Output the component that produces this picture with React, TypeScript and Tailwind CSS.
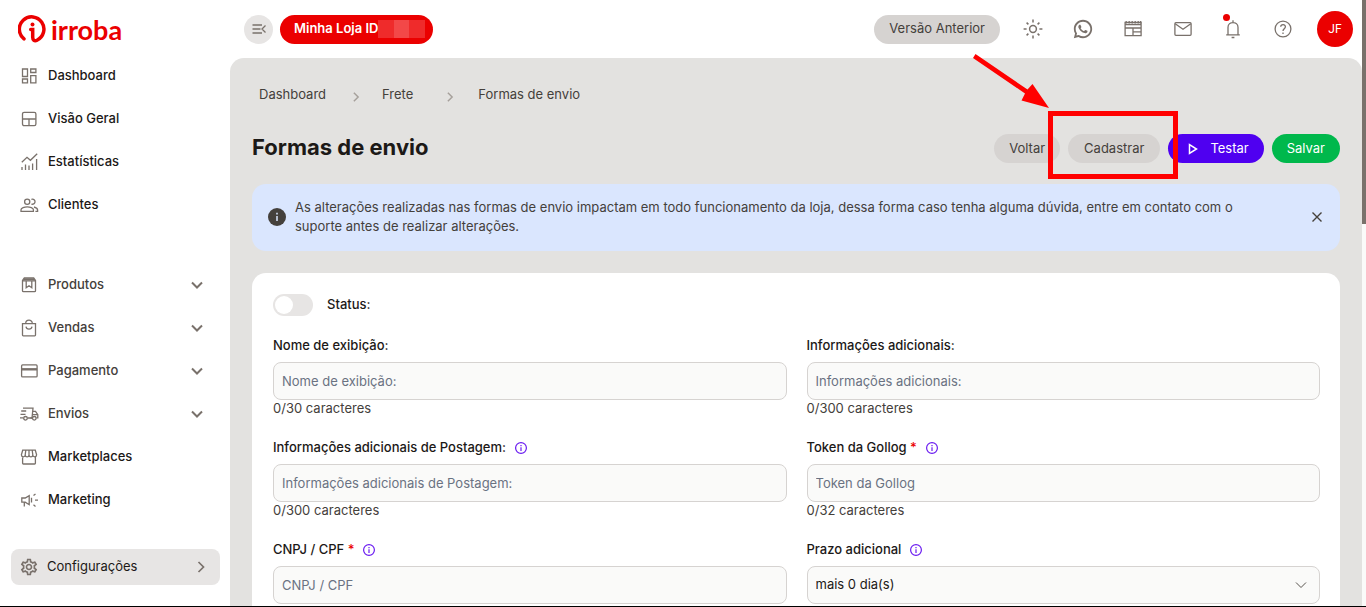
import React from "react";
import { MdOutlineSettings } from "react-icons/md";
import { RiWhatsappLine } from "react-icons/ri";

const Icon = ({
  children,
  className = "size-[22px]",
}: {
  children: React.ReactNode;
  className?: string;
}) => (
  <svg
    viewBox="0 0 22 22"
    fill="none"
    stroke="currentColor"
    strokeWidth="1.3"
    aria-hidden="true"
    className={`shrink-0 ${className}`}
  >
    {children}
  </svg>
);

const icons = {
  dashboard: (
    <Icon>
      <path d="M4.5 4h5v7.5h-5zM12.7 4h5.2v3.5h-5.2zM4.5 14h5v3.9h-5zM12.7 10.6h5.2v7.3h-5.2z" />
    </Icon>
  ),
  layout: (
    <Icon>
      <rect x="4.5" y="4.3" width="13.4" height="13.4" rx="1.6" />
      <path d="M4.5 11h13.4M11 11v6.7" />
    </Icon>
  ),
  stats: (
    <Icon>
      <path d="M3.8 11.2 9 6.3l3.4 3 6.8-6.6" />
      <path d="M4 19v-3M7.5 19v-5.6M11 19v-4.6M14.6 19v-6.6M18.6 19V8" />
    </Icon>
  ),
  clients: (
    <Icon>
      <circle cx="9.2" cy="7.7" r="2.6" />
      <path d="M3 17.4v-1.6c0-1.8 3.5-2.9 6.2-2.9s6.2 1.1 6.2 2.9v1.6zM13.4 5.3c2.8-.5 3.9 1.3 3.6 2.8-.3 1.5-1.8 2.5-3.6 2M16 13c2.3.6 3.6 1.7 3.6 3v1.4h-2.2" />
    </Icon>
  ),
  products: (
    <Icon>
      <path d="M4.5 6.5v10.2c0 .6.4 1 1 1h11c.6 0 1-.4 1-1V6.5L15.7 4H6.3zM4.5 6.8h13M8.2 6.8v7l2.8-2 2.8 2v-7" />
      <path d="M6 5.4h10" strokeWidth="2" />
    </Icon>
  ),
  sales: (
    <Icon>
      <path d="M4.5 6.6h13v11.5c0 .4-.3.7-.7.7H5.2a.7.7 0 0 1-.7-.7zM7.7 6.4c0-4.4 6.6-4.4 6.6 0M8 9.7c.5 3.3 5.5 3.3 6 0" />
    </Icon>
  ),
  payment: (
    <Icon>
      <rect x="3.6" y="4.9" width="15.5" height="12" rx="1" />
      <path d="M3.6 9.3h15.5" strokeWidth="2.4" />
    </Icon>
  ),
  shipping: (
    <Icon>
      <path d="M5 5.2h10l-1 9.8H9.4M15 8.3h2.5l2.3 3.4v3.2h-1.4M14.500 11.7h5.200M3.200 8h5M2.500 11.300h5" />
      <circle cx="7.5" cy="15.3" r="1.8" />
      <circle cx="16.3" cy="15.3" r="1.8" />
      <path d="M2 14.9h3.600M12.500 15h2" />
    </Icon>
  ),
  marketplaces: (
    <Icon>
      <path d="M4.600 10v7.200c0 .5.300.8.800.8h11.200c.5 0 .8-.3.8-.8V10M4.700 4.200h12.600l1.300 4.600c0 2.600-3.500 2.600-3.800.2-.2 2.600-3.600 2.600-3.800 0-.2 2.600-3.600 2.600-3.800 0-.3 2.400-3.800 2.400-3.800-.2zM7.800 4.200 7.200 9M11 4.200V9M14.200 4.200l.6 4.800" />
    </Icon>
  ),
  marketing: (
    <Icon>
      <path d="M3.8 9v4.2h3.4l4 2.5V6.7L7.2 9zM6.3 13.2v4.2M13.5 8.8v4.6M17 11.1h3M15.5 6.5l2-1.6M15.5 15.8l2 1.6" />
    </Icon>
  ),
};

const ChevronDown = ({ className }: { className: string }) => (
  <svg
    viewBox="0 0 14 14"
    fill="none"
    stroke="currentColor"
    aria-hidden="true"
    className={className}
  >
    <path d="m2 4.5 5 5 5-5" />
  </svg>
);

const ChevronRight = ({ className }: { className: string }) => (
  <svg
    viewBox="0 0 14 14"
    fill="none"
    stroke="currentColor"
    strokeWidth="1.7"
    aria-hidden="true"
    className={className}
  >
    <path d="m4.5 2 5 5-5 5" />
  </svg>
);

const InfoIcon = () => (
  <svg
    viewBox="0 0 14 14"
    fill="none"
    stroke="currentColor"
    strokeWidth="1.2"
    aria-hidden="true"
    className="ml-2 size-[14px] text-[#6a1bf0]"
  >
    <circle cx="7" cy="7" r="5.4" />
    <path d="M7 6.3v3.8M7 4v1.2" />
  </svg>
);

const mainLinks = [
  { label: "Dashboard", icon: icons.dashboard },
  { label: "Visão Geral", icon: icons.layout },
  { label: "Estatísticas", icon: icons.stats },
  { label: "Clientes", icon: icons.clients },
];

const storeLinks = [
  { label: "Produtos", icon: icons.products, submenu: true },
  { label: "Vendas", icon: icons.sales, submenu: true },
  { label: "Pagamento", icon: icons.payment, submenu: true },
  { label: "Envios", icon: icons.shipping, submenu: true },
  { label: "Marketplaces", icon: icons.marketplaces },
  { label: "Marketing", icon: icons.marketing },
];

type NavItemProps = {
  label: string;
  icon: React.ReactNode;
  submenu?: boolean;
};

const NavItem = ({ label, icon, submenu }: NavItemProps) => {
  const row = "flex h-[43px] w-full items-center gap-2 pr-[26px] pl-[18px] font-medium";
  if (submenu) {
    return (
      <button type="button" className={`${row} text-stone-700`}>
        <span className="text-stone-500">{icon}</span>
        <span className="flex-1 text-left">{label}</span>
        <ChevronDown className="size-[14px] stroke-2 text-stone-500" />
      </button>
    );
  }
  return (
    <a href="#" className={`${row} text-stone-900`}>
      <span className="text-stone-500">{icon}</span>
      {label}
    </a>
  );
};

const Sidebar = () => (
  <aside className="w-[230px] shrink-0">
    <a href="#" className="flex h-[54px] items-center gap-[5px] pl-[18px] text-[#eb0000]">
      <svg
        viewBox="0 0 28 28"
        fill="none"
        stroke="currentColor"
        className="mt-1 size-7"
        aria-hidden="true"
      >
        <path
          d="M6 23.8A12.300 12.300 0 1 1 19 25.200C16.500 26.600 14.700 25 14.700 22.200V14.400H12.700"
          strokeWidth="3.5"
          strokeLinecap="round"
        />
        <circle cx="14.5" cy="9.4" r="2" fill="currentColor" stroke="none" />
      </svg>
      <span className="mt-1 font-['Lato',sans-serif] text-[27px] leading-none font-bold">
        irroba
      </span>
    </a>
    <nav>
      {mainLinks.map((item) => (
        <NavItem key={item.label} {...item} />
      ))}
      <div className="mt-[37px]">
        {storeLinks.map((item) => (
          <NavItem key={item.label} {...item} />
        ))}
      </div>
      <button
        type="button"
        className="mx-[11px] mt-7 flex h-9 w-[209px] items-center gap-2 rounded-lg bg-stone-200 pr-3 pl-2 text-stone-900"
      >
        <MdOutlineSettings className="size-5 text-stone-500" />
        <span className="flex-1 text-left">Configurações</span>
        <ChevronRight className="size-[14px] text-stone-500" />
      </button>
    </nav>
  </aside>
);

const Header = () => (
  <header className="flex h-[58px] items-center pr-[9px] pl-[14px] text-stone-500">
    <button
      type="button"
      aria-label="Menu"
      className="mr-[7px] flex size-[29px] items-center justify-center rounded-full bg-stone-200"
    >
      <Icon>
        <path d="M4.5 7H14M4.5 11h8M4.5 15H14M17.5 7.5 14 11l3.5 3.5" />
      </Icon>
    </button>
    <button
      type="button"
      className="flex h-[29px] items-center rounded-full bg-[#eb0000] pr-2 pl-[14px] font-semibold text-white"
    >
      Minha Loja ID
      <span className="flex h-[18px]">
        <span className="w-4 bg-[#ef2b2b]" />
        <span className="w-[15px] bg-[#f34848]" />
        <span className="w-4 bg-[#ef2b2b]" />
      </span>
    </button>

    <button
      type="button"
      className="ml-auto h-[29px] rounded-full bg-stone-300 px-[15px] text-stone-700"
    >
      Versão Anterior
    </button>
    <div className="mr-[23px] ml-[22px] flex gap-7">
      <button type="button" aria-label="Tema">
        <Icon>
          <circle cx="11" cy="11" r="3.4" strokeWidth="1.5" />
          <path
            d="M11 1.6v3M11 17.4v3M1.6 11h3M17.4 11h3M4.600 4.600l1.800 1.800M15.600 15.600l1.800 1.800M4.600 17.400l1.800-1.800M15.600 6.400l1.800-1.800"
            strokeWidth="1.5"
          />
        </Icon>
      </button>
      <button type="button" aria-label="WhatsApp">
        <RiWhatsappLine className="size-[22px]" />
      </button>
      <button type="button" aria-label="Notícias">
        <Icon>
          <path d="M3.100 4.500h16v13.200h-16zM3.100 10h16M11 10v7.700M11 13.800h8" />
          <path d="M3 6.600h16M4.200 3v2.500M7.200 3v2.500M10.200 3v2.500M13.200 3v2.500M16.200 3v2.500M18.600 3v2.500" />
        </Icon>
      </button>
      <button type="button" aria-label="Mensagens">
        <Icon>
          <rect x="2.9" y="4.7" width="16.2" height="12.6" rx="1" />
          <path d="m3.2 5.8 7.8 5.4 7.8-5.4" />
        </Icon>
      </button>
      <button type="button" aria-label="Notificações" className="relative">
        <Icon>
          <path d="M4.2 16.9h13.6M6 16.9V9.2c0-6.200 10-6.200 10 0v7.700M11 2.300v2.400M9.600 19.500h2.800" />
        </Icon>
        <span className="absolute -top-1 left-px size-[7px] rounded-full bg-[#eb0000]" />
      </button>
      <button type="button" aria-label="Ajuda">
        <Icon>
          <circle cx="11" cy="11" r="7.9" />
          <path d="M8.7 8.8c.2-3 4.800-2.800 4.700 0-.1 1.900-2.400 2-2.400 4.200M11 14.400v1.500" />
        </Icon>
      </button>
    </div>
    <button
      type="button"
      className="size-9 rounded-full bg-[#eb0000] font-['Roboto',sans-serif] text-xs text-white"
    >
      JF
    </button>
  </header>
);

const Breadcrumb = () => (
  <nav aria-label="Breadcrumb" className="flex h-5 items-center pl-[7px]">
    <a href="#">Dashboard</a>
    <ChevronRight className="mt-1 mr-5 ml-6 size-3 text-stone-400" />
    <a href="#">Frete</a>
    <ChevronRight className="mt-1 mr-[22px] ml-[31px] size-3 text-stone-400" />
    <a href="#">Formas de envio</a>
  </nav>
);

const Actions = () => (
  <div className="flex gap-2 *:h-[29px]">
    <button type="button" className="rounded-full bg-stone-300 px-[15px]">
      Voltar
    </button>
    <div className="relative">
      <button type="button" className="h-full rounded-full bg-stone-300 px-4">
        Cadastrar
      </button>
      <div className="pointer-events-none absolute -top-[23px] -right-[18px] -bottom-4 -left-5 z-10 border-5 border-[#ff0000]" />
      <svg
        viewBox="0 0 76 55"
        className="pointer-events-none absolute -top-[80px] -left-[95px] h-[55px] w-[76px]"
        fill="#ff0000"
        aria-hidden="true"
      >
        <path d="M2.500 0 54.500 35.500 59.500 30 76 54 48.500 46.500 52 39.500 0 4z" />
      </svg>
    </div>
    <button
      type="button"
      className="flex items-center rounded-full bg-[#4f00f0] pr-[15px] pl-[18px] text-white"
    >
      <svg
        viewBox="0 0 14 14"
        fill="none"
        stroke="currentColor"
        strokeWidth="1.5"
        className="mr-[10px] size-[14px]"
        aria-hidden="true"
      >
        <path d="M3.500 2.600v8.800L10.500 7z" />
      </svg>
      Testar
    </button>
    <button type="button" className="rounded-full bg-[#00b84c] px-[15px] text-white">
      Salvar
    </button>
  </div>
);

const Notice = () => (
  <div className="mt-[21px] flex items-center gap-[9px] rounded-[14px] bg-[#dae6fe] px-4 pt-[14px] pb-[15px]">
    <svg viewBox="0 0 18 18" className="size-[18px] shrink-0" aria-hidden="true">
      <circle cx="9" cy="9" r="9" fill="#44403c" />
      <path d="M9 8v5M9 4.700v1.800" stroke="#dae6fe" strokeWidth="1.5" />
    </svg>
    <p className="flex-1 leading-[19px]">
      As alterações realizadas nas formas de envio impactam em todo funcionamento da loja, dessa
      forma caso tenha alguma dúvida, entre em contato com o suporte antes de realizar alterações.
    </p>
    <button type="button" aria-label="Fechar" className="ml-6">
      <svg viewBox="0 0 14 14" stroke="currentColor" strokeWidth="1.4" className="size-[14px]">
        <path d="m2.500 2.500 9 9M11.500 2.500l-9 9" />
      </svg>
    </button>
  </div>
);

type FieldProps = {
  id: string;
  label: string;
  max?: number;
  required?: boolean;
  info?: boolean;
  children?: React.ReactNode;
};

const control =
  "h-[38px] w-full rounded-lg border border-stone-300 bg-stone-50 px-2 text-stone-900 outline-none placeholder:text-gray-500";

const Field = ({ id, label, max, required, info, children }: FieldProps) => (
  <div>
    <div className="mb-[3px] flex h-[26px] items-center">
      <label htmlFor={id} className="font-medium text-stone-900">
        {label}
        {required && <span className="text-[#eb0000]"> *</span>}
      </label>
      {info && <InfoIcon />}
    </div>
    {children ?? <input id={id} type="text" placeholder={label} className={control} />}
    {max && <p className="h-4 leading-4">0/{max} caracteres</p>}
  </div>
);

const ShippingForm = () => (
  <form className="mt-[22px] rounded-[14px] bg-white pt-[21px] pr-5 pb-10 pl-[21px]">
    <div className="flex h-[22px] items-center gap-[14px]">
      <input
        id="status"
        type="checkbox"
        role="switch"
        className="h-[22px] w-10 appearance-none rounded-full bg-stone-200 p-[2px] before:block before:size-[18px] before:rounded-full before:bg-white checked:bg-[#4f00f0] checked:before:ml-[18px]"
      />
      <label htmlFor="status" className="font-medium text-stone-900">
        Status:
      </label>
    </div>
    <div className="mt-[17px] grid grid-cols-2 gap-x-5 gap-y-[19px]">
      <Field id="nome" label="Nome de exibição:" max={30} />
      <Field id="info" label="Informações adicionais:" max={300} />
      <Field id="postagem" label="Informações adicionais de Postagem:" max={300} info />
      <Field id="token" label="Token da Gollog" max={32} required info />
      <Field id="documento" label="CNPJ / CPF" max={14} required info />
      <Field id="prazo" label="Prazo adicional" info>
        <div className="relative">
          <select id="prazo" className={`${control} appearance-none`}>
            <option>mais 0 dia(s)</option>
          </select>
          <ChevronDown className="pointer-events-none absolute top-3 right-3 size-[14px] text-stone-600" />
        </div>
      </Field>
    </div>
  </form>
);

const App = () => {
  return (
    <div className="flex h-screen overflow-hidden border-b border-black bg-white font-['Inter',sans-serif] text-[13px] text-stone-700">
      <Sidebar />
      <div className="min-w-0 flex-1">
        <Header />
        <main className="min-h-full rounded-t-[14px] bg-[#e3e2e0] px-[22px] pt-[27px]">
          <Breadcrumb />
          <div className="mt-[29px] flex items-start justify-between">
            <h1 className="text-[22px] leading-[26px] font-bold text-stone-900">
              Formas de envio
            </h1>
            <Actions />
          </div>
          <Notice />
          <ShippingForm />
        </main>
      </div>
      <div className="w-1 shrink-0 bg-stone-50">
        <div className="h-[37%] bg-stone-500" />
      </div>
    </div>
  );
};

export default App;
